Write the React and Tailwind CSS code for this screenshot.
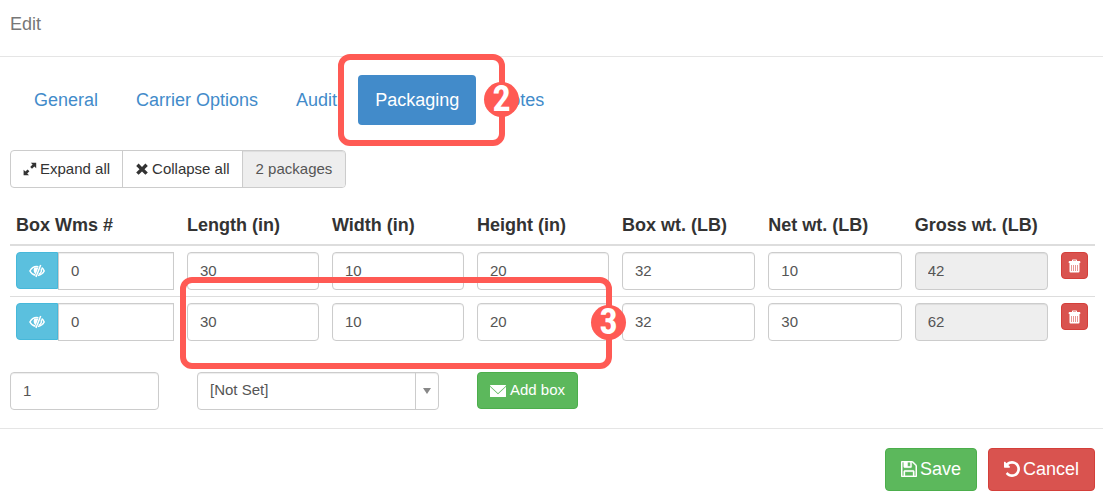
import React, { useState } from "react";

const inputClass =
  "block h-[38px] w-full min-w-0 border border-[#ccc] bg-white px-3 pb-0.5 text-[15px] text-[#555] shadow-[inset_0_1px_1px_rgba(0,0,0,0.075)] outline-none";

function ResizeFullIcon() {
  return (
    <svg viewBox="0 0 14 14" className="size-3.5 shrink-0" fill="currentColor" aria-hidden="true">
      <path d="M7.8 0.8H13.2V6.2L11.4 4.4L9 6.8L7.2 5L9.6 2.6Z" />
      <path d="M0.6 13.2V7.8L2.4 9.6L4.6 7.4L6.4 9.2L4.2 11.4L6 13.2Z" />
    </svg>
  );
}

function RemoveIcon() {
  return (
    <svg viewBox="0 0 14 14" className="size-3.5 shrink-0" fill="currentColor" aria-hidden="true">
      <path d="M3.6 1.6L7 4.9L10.4 1.6L12.8 4L9.5 7.2L12.8 10.5L10.4 12.8L7 9.6L3.6 12.8L1.2 10.5L4.5 7.2L1.2 4Z" />
    </svg>
  );
}

function EyeCloseIcon() {
  return (
    <svg viewBox="0 0 16 14" className="h-3.5 w-4" fill="none" stroke="currentColor" aria-hidden="true">
      <path d="M9.4 2.7C5.4 1.8 2.4 4.2 0.9 7C2.2 9.4 4 10.9 6.6 11.3" strokeWidth="1.5" />
      <path d="M12.6 3.6C13.8 4.5 14.6 5.6 15.2 7C13.8 9.6 11.8 11.1 9 11.4" strokeWidth="1.5" />
      <path d="M11.7 1L7 13" strokeWidth="1.5" />
      <path d="M5.4 3.6C4 6 4.4 8.6 6.7 10.2L9.4 3.4Z" fill="currentColor" stroke="none" />
      <path d="M12.2 4.6C12.8 7 11.8 9.2 9.8 10.4" strokeWidth="1.4" />
    </svg>
  );
}

function TrashIcon() {
  return (
    <svg viewBox="0 0 13 14" className="h-3.5 w-[13px]" fill="currentColor" aria-hidden="true">
      <path fillRule="evenodd" d="M4 2V1.200Q4 0.500 4.700 0.500H8.300Q9 0.500 9 1.200V2H11.600Q12.300 2 12.300 2.700V4H0.700V2.700Q0.700 2 1.400 2ZM5 2H8V1.400H5Z" />
      <path fillRule="evenodd" d="M1.500 4H11.500V12.500Q11.500 13.500 10.500 13.500H2.500Q1.500 13.500 1.500 12.500ZM3.400 6V12H4.000V6ZM5.300 6V12H5.900V6ZM7.100 6V12H7.700V6ZM9.000 6V12H9.600V6Z" />
    </svg>
  );
}

function EnvelopeIcon() {
  return (
    <svg viewBox="0 0 16 12" className="h-3 w-4 shrink-0" fill="currentColor" aria-hidden="true">
      <path d="M0.500 0H15.500Q16 0 16 0.800L8 8.200L0 0.800Q0 0 0.500 0Z" />
      <path d="M0 1.800L8 9.200L16 1.800V11.400Q16 12 15.400 12H0.600Q0 12 0 11.400Z" />
    </svg>
  );
}

function FloppyIcon() {
  return (
    <svg viewBox="0 128 1536 1536" className="size-4 shrink-0" fill="currentColor" stroke="currentColor" strokeWidth="30" aria-hidden="true">
      <path d="M384 1536h768v-384h-768v384zm896 0h128v-896q0-14-10-38.5t-20-34.5l-281-281q-10-10-34-20t-39-10v416q0 40-28 68t-68 28h-576q-40 0-68-28t-28-68v-416h-128v1280h128v-416q0-40 28-68t68-28h832q40 0 68 28t28 68v416zm-384-928v-320q0-13-9.500-22.500t-22.500-9.500h-192q-13 0-22.500 9.500t-9.500 22.500v320q0 13 9.500 22.500t22.500 9.500h192q13 0 22.500-9.500t9.500-22.500zm640 32v928q0 40-28 68t-68 28h-1344q-40 0-68-28t-28-68v-1344q0-40 28-68t68-28h928q40 0 88 20t76 48l280 280q28 28 48 76t20 88z" />
    </svg>
  );
}

function UndoIcon() {
  return (
    <svg viewBox="128 128 1536 1536" className="size-4 shrink-0" fill="currentColor" aria-hidden="true">
      <path d="M1664 896q0 156-61 298t-164 245-245 164-298 61q-172 0-327-72.500t-264-204.500q-7-10-6.500-22.500t8.500-20.500l137-138q10-9 25-9 16 2 23 12 73 95 179 147t225 52q104 0 198.500-40.500t163.500-109.500 109.500-163.500 40.500-198.500-40.500-198.500-109.500-163.500-163.500-109.500-198.500-40.500q-98 0-188 35.500t-160 101.500l137 138q31 30 14 69-17 40-59 40h-448q-26 0-45-19t-19-45v-448q0-42 40-59 39-17 69 14l130 129q107-101 244.500-156.500t284.500-55.500q156 0 298 61t245 164 164 245 61 298z" />
    </svg>
  );
}

function Callout({ number, className }) {
  return (
    <span className={`pointer-events-none absolute z-10 rounded-xl border-6 border-[#ff5a54] ${className}`}>
      <span className="absolute inset-y-0 -right-5 flex items-center pb-0.5">
        <span className="flex size-[35px] items-center justify-center rounded-full bg-[#ff5a54] font-['Roboto_Condensed',Roboto,sans-serif] text-4xl leading-none font-bold text-white">
          {number}
        </span>
      </span>
    </span>
  );
}

const tabs = ["General", "Carrier Options", "Audit", "Packaging", "Notes"];
const headings = ["Box Wms #", "Length (in)", "Width (in)", "Height (in)", "Box wt. (LB)", "Net wt. (LB)", "Gross wt. (LB)"];
const initialRows = [
  { wms: "0", values: ["30", "10", "20", "32", "10", "42"] },
  { wms: "0", values: ["30", "10", "20", "32", "30", "62"] },
];

export default function App() {
  const [rows] = useState(initialRows);
  return (
    <main className="bg-white font-['Liberation_Sans',Arial,sans-serif] text-[15px] text-[#333]">
      <header className="border-b border-[#e5e5e5] px-2.5 pt-3 pb-5">
        <h1 className="text-lg leading-6 text-[#777]">Edit</h1>
      </header>

      <nav className="flex gap-1 px-[17px] pt-[18px] text-lg">
        {tabs.map((tab) => {
          const active = tab === "Packaging";
          return (
            <div key={tab} className="relative">
              <a
                href={"#" + tab.toLowerCase().replace(" ", "-")}
                aria-current={active ? "page" : undefined}
                className={
                  "flex h-[50px] items-center rounded px-[17px] whitespace-nowrap " +
                  (active ? "bg-[#428bca] text-white" : "text-[#428bca]")
                }
              >
                {tab}
              </a>
              {active && <Callout number="2" className="-top-[21px] -right-[29px] -bottom-[21px] -left-5" />}
            </div>
          );
        })}
      </nav>

      <section className="pt-[25px] pr-2 pl-2.5">
        <div className="flex h-[38px] w-fit rounded border border-[#ccc]">
          <button type="button" className="flex items-center gap-[3px] border-r border-[#ccc] px-3">
            <ResizeFullIcon />
            Expand all
          </button>
          <button type="button" className="flex items-center gap-[3px] px-3">
            <RemoveIcon />
            Collapse all
          </button>
          <span className="flex items-center rounded-r-[3px] border-l border-[#ccc] bg-[#eee] px-[13px] text-[#555] shadow-[inset_0_1px_1px_rgba(0,0,0,0.075)]">
            2 packages
          </span>
        </div>

        <table className="mt-4 w-full table-fixed border-separate border-spacing-0">
          <colgroup>
            <col className="w-[170px]" />
            <col span="3" className="w-[145px]" />
            <col span="3" />
            <col className="w-[41px]" />
          </colgroup>
          <thead>
            <tr className="h-[42px] text-left text-lg whitespace-nowrap">
              {headings.map((h, i) => (
                <th key={h} scope="col" className={"border-b-2 border-[#ddd] pt-0.5 font-bold " + (i === 0 ? "pl-1.5" : "pl-[7px]")}>
                  {h}
                </th>
              ))}
              <th scope="col" aria-label="Actions" className="border-b-2 border-[#ddd]" />
            </tr>
          </thead>
          <tbody>
            {rows.map((row, r) => {
              const line = r > 0 ? " border-t border-[#ddd]" : "";
              return (
                <tr key={r}>
                  <td className={"px-1.5 py-1.5" + line}>
                    <div className="flex">
                      <button
                        type="button"
                        aria-label={`Hide box ${r + 1}`}
                        className="flex h-[37px] w-[42px] shrink-0 items-center justify-center rounded-l border border-[#46b8da] bg-[#5bc0de] text-white"
                      >
                        <EyeCloseIcon />
                      </button>
                      <input aria-label={`Box Wms # ${r + 1}`} defaultValue={row.wms} className={inputClass} />
                    </div>
                  </td>
                  {row.values.map((value, i) => (
                    <td key={i} className={"relative py-1.5 pr-1.5 pl-[7px]" + line}>
                      <input
                        aria-label={`${headings[i + 1]} ${r + 1}`}
                        defaultValue={value}
                        readOnly={i === 5}
                        className={inputClass + " rounded " + (i === 5 ? "bg-[#eee]!" : "")}
                      />
                      {r === 1 && i === 0 && <Callout number="3" className="-top-5 left-0 h-[92px] w-[calc(300%-3px)]" />}
                    </td>
                  ))}
                  <td className={"py-1.5 pr-1.5 pl-[7px] align-top" + line}>
                    <button
                      type="button"
                      aria-label={`Delete box ${r + 1}`}
                      className="flex size-[27px] items-center justify-center rounded border border-[#d43f3a] bg-[#d9534f] text-white"
                    >
                      <TrashIcon />
                    </button>
                  </td>
                </tr>
              );
            })}
          </tbody>
        </table>

        <div className="mt-[25px] flex gap-[38px] pb-[18px]">
          <div className="w-[149px]">
            <input aria-label="Number of boxes" defaultValue="1" className={inputClass + " rounded"} />
          </div>
          <div className="relative w-[242px]">
            <select aria-label="Box type" className={inputClass + " appearance-none rounded"}>
              <option>[Not Set]</option>
            </select>
            <span className="pointer-events-none absolute inset-y-px right-px flex w-[23px] items-center justify-center border-l border-[#ccc] text-[#888]">
              <svg viewBox="0 0 8 6" className="h-1.5 w-2" fill="currentColor" aria-hidden="true">
                <path d="M0 0H8L4 6Z" />
              </svg>
            </span>
          </div>
          <button
            type="button"
            className="flex h-[37px] items-center gap-1 rounded border border-[#4cae4c] bg-[#5cb85c] px-3 text-white"
          >
            <EnvelopeIcon />
            Add box
          </button>
        </div>
      </section>

      <footer className="flex justify-end gap-[11px] border-t border-[#e5e5e5] pt-[19px] pr-2 pb-2 text-lg text-white">
        <button type="button" className="flex h-[43px] items-center gap-[3px] rounded border border-[#4cae4c] bg-[#5cb85c] px-[15px] pb-0.5">
          <FloppyIcon />
          Save
        </button>
        <button type="button" className="flex h-[43px] items-center gap-[3px] rounded border border-[#d43f3a] bg-[#d9534f] px-[15px] pb-0.5">
          <UndoIcon />
          Cancel
        </button>
      </footer>
    </main>
  );
}
